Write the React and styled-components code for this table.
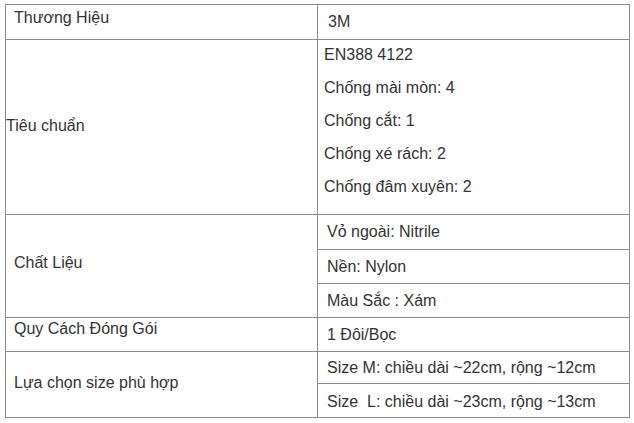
import React from "react";
import styled, { createGlobalStyle } from "styled-components";

const GlobalStyle = createGlobalStyle`
  html, body {
    margin: 0;
    padding: 0;
    background: #fff;
  }
  body {
    font-family: "Liberation Sans", Arial, sans-serif;
    color: #333;
  }
`;

const Wrapper = styled.div`
  padding: 4px 0 0 5px;
`;

const SpecTable = styled.table`
  width: 624px;
  border-collapse: collapse;
  table-layout: fixed;
  font-size: 16px;
  line-height: 18px;
  color: #333;
`;

const Column = styled.col`
  width: ${(p) => p.$w}px;
`;

const Row = styled.tr`
  height: ${(p) => p.$h}px;
`;

const LabelCell = styled.td`
  border: 1px solid #8c8c8c;
  vertical-align: ${(p) => p.$valign || "middle"};
  padding: ${(p) => p.$pad || "0 0 0 8px"};
  white-space: nowrap;
`;

const ValueCell = styled.td`
  border: 1px solid #8c8c8c;
  vertical-align: ${(p) => p.$valign || "middle"};
  padding: ${(p) => p.$pad || "0 0 0 9px"};
  white-space: pre;
`;

const Line = styled.div`
  margin-bottom: 15px;

  &:last-child {
    margin-bottom: 0;
  }
`;

const standards = [
  "EN388 4122",
  "Chống mài mòn: 4",
  "Chống cắt: 1",
  "Chống xé rách: 2",
  "Chống đâm xuyên: 2",
];

export default function App() {
  return (
    <>
      <GlobalStyle />
      <Wrapper>
        <SpecTable>
          <colgroup>
            <Column $w={312} />
            <Column $w={312} />
          </colgroup>
          <tbody>
            <Row $h={35}>
              <LabelCell $valign="top" $pad="4px 0 0 8px">
                Thương Hiệu
              </LabelCell>
              <ValueCell $pad="0 0 1px 10px">3M</ValueCell>
            </Row>
            <Row $h={175}>
              <LabelCell $pad="0 0 2px 0">Tiêu chuẩn</LabelCell>
              <ValueCell $valign="top" $pad="6px 0 0 6px">
                {standards.map((s) => (
                  <Line key={s}>{s}</Line>
                ))}
              </ValueCell>
            </Row>
            <Row $h={35}>
              <LabelCell rowSpan={3} $pad="0 0 6px 8px">
                Chất Liệu
              </LabelCell>
              <ValueCell>Vỏ ngoài: Nitrile</ValueCell>
            </Row>
            <Row $h={34}>
              <ValueCell>Nền: Nylon</ValueCell>
            </Row>
            <Row $h={34}>
              <ValueCell>Màu Sắc : Xám</ValueCell>
            </Row>
            <Row $h={34}>
              <LabelCell $valign="top" $pad="2px 0 0 8px">
                Quy Cách Đóng Gói
              </LabelCell>
              <ValueCell>1 Đôi/Bọc</ValueCell>
            </Row>
            <Row $h={32}>
              <LabelCell rowSpan={2} $pad="0 0 4px 8px">
                Lựa chọn size phù hợp
              </LabelCell>
              <ValueCell>Size M: chiều dài ~22cm, rộng ~12cm</ValueCell>
            </Row>
            <Row $h={34}>
              <ValueCell $pad="3px 0 0 9px">Size  L: chiều dài ~23cm, rộng ~13cm</ValueCell>
            </Row>
          </tbody>
        </SpecTable>
      </Wrapper>
    </>
  );
}
